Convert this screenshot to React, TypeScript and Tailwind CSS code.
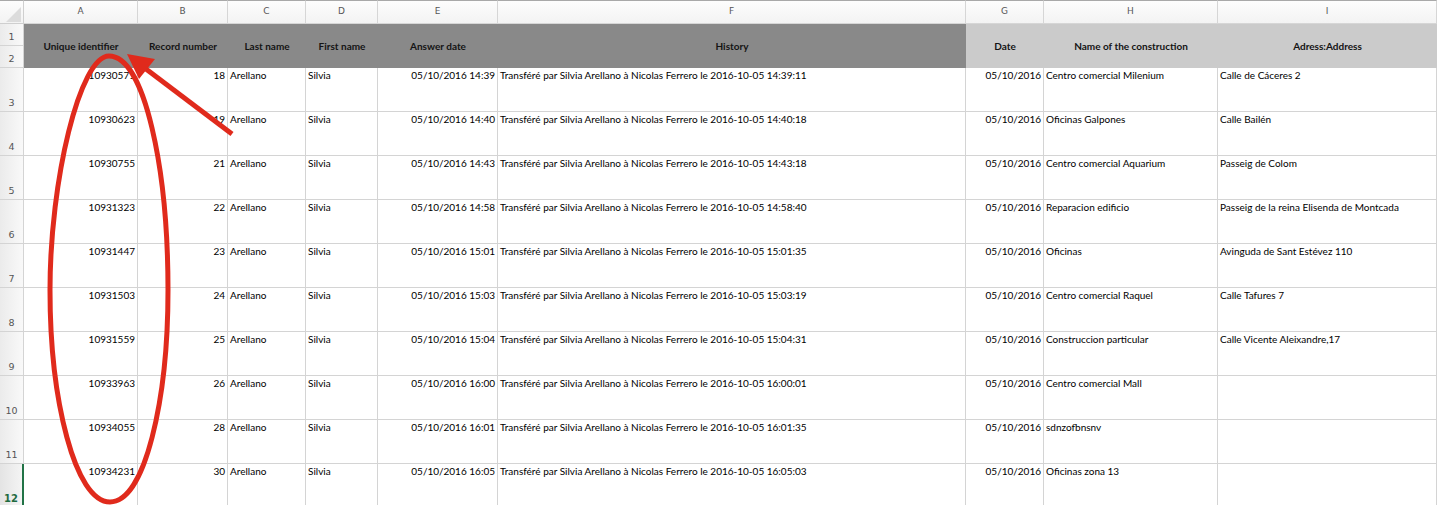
import React from "react";

const cols = ["A", "B", "C", "D", "E", "F", "G", "H", "I"];

type Row = {
  n: number;
  id: string;
  rec: string;
  time: string;
  sec: string;
  name: string;
  addr: string;
};

const rows: Row[] = [
  { n: 3, id: "10930571", rec: "18", time: "14:39", sec: "14:39:11", name: "Centro comercial Milenium", addr: "Calle de Cáceres 2" },
  { n: 4, id: "10930623", rec: "19", time: "14:40", sec: "14:40:18", name: "Oficinas Galpones", addr: "Calle Bailén" },
  { n: 5, id: "10930755", rec: "21", time: "14:43", sec: "14:43:18", name: "Centro comercial Aquarium", addr: "Passeig de Colom" },
  { n: 6, id: "10931323", rec: "22", time: "14:58", sec: "14:58:40", name: "Reparacion edificio", addr: "Passeig de la reina Elisenda de Montcada" },
  { n: 7, id: "10931447", rec: "23", time: "15:01", sec: "15:01:35", name: "Oficinas", addr: "Avinguda de Sant Estévez 110" },
  { n: 8, id: "10931503", rec: "24", time: "15:03", sec: "15:03:19", name: "Centro comercial Raquel", addr: "Calle Tafures 7" },
  { n: 9, id: "10931559", rec: "25", time: "15:04", sec: "15:04:31", name: "Construccion particular", addr: "Calle Vicente Aleixandre,17" },
  { n: 10, id: "10933963", rec: "26", time: "16:00", sec: "16:00:01", name: "Centro comercial Mall", addr: "" },
  { n: 11, id: "10934055", rec: "28", time: "16:01", sec: "16:01:35", name: "sdnzofbnsnv", addr: "" },
  { n: 12, id: "10934231", rec: "30", time: "16:05", sec: "16:05:03", name: "Oficinas zona 13", addr: "" },
];

const cell = "border-r border-b border-[#d4d4d4] overflow-hidden whitespace-nowrap pt-[1px] leading-[13px]";
const right = `${cell} text-right pr-[2px]`;
const left = `${cell} text-left pl-[2px]`;

export default function App() {
  return (
    <div className="relative w-[1437px] h-[505px] overflow-hidden bg-white font-['Lato',sans-serif] text-[10px] text-black">
      <div className="grid grid-cols-[24px_114px_90px_78px_72px_120px_468px_78px_174px_1fr] grid-rows-[24px_22px_22px_repeat(10,44px)]">
        {/* corner */}
        <div className="relative border-t border-t-[#a9a9a9] border-r border-b border-[#cfcfcf] bg-linear-to-b from-[#fdfdfd] to-[#f3f3f3]">
          <div className="absolute left-[6px] top-[6px] w-[15px] h-[15px] bg-[#dcdcdc] [clip-path:polygon(100%_0,100%_100%,0_100%)]" />
        </div>
        {cols.map((c) => (
          <div
            key={c}
            className="flex items-center justify-center border-t border-t-[#a9a9a9] border-r border-b border-[#d6d6d6] bg-linear-to-b from-[#fdfdfd] to-[#f3f3f3] font-['DejaVu_Sans',sans-serif] text-[9px] text-[#555]"
          >
            {c}
          </div>
        ))}

        {/* row 1 header */}
        <div className="flex items-end justify-center pb-[1px] border-r border-b border-[#d4d4d4] bg-linear-to-r from-[#ebebeb] to-[#f9f9f9] font-['DejaVu_Sans',sans-serif] text-[9.5px] text-[#555]">
          1
        </div>
        {[
          "Unique identifier",
          "Record number",
          "Last name",
          "First name",
          "Answer date",
          "History",
        ].map((h) => (
          <div key={h} className="row-span-2 flex items-center justify-center bg-[#898989] font-bold text-[#141414]">
            {h}
          </div>
        ))}
        {["Date", "Name of the construction", "Adress:Address"].map((h) => (
          <div key={h} className="row-span-2 flex items-center justify-center bg-[#cbcbcb] font-bold text-[#141414]">
            {h}
          </div>
        ))}
        <div className="flex items-end justify-center pb-[1px] border-r border-b border-[#d4d4d4] bg-linear-to-r from-[#ebebeb] to-[#f9f9f9] font-['DejaVu_Sans',sans-serif] text-[9.5px] text-[#555]">
          2
        </div>

        {rows.map((r) => (
          <React.Fragment key={r.n}>
            {r.n === 12 ? (
              <div className="flex items-end justify-center pb-[1px] border-r-2 border-r-[#217346] border-b border-b-[#d4d4d4] bg-linear-to-r from-[#e4e4e4] to-[#f4f4f4] font-['DejaVu_Sans',sans-serif] text-[10px] font-bold text-[#1f6b40]">
                12
              </div>
            ) : (
              <div className="flex items-end justify-center pb-[1px] border-r border-b border-[#d4d4d4] bg-linear-to-r from-[#ebebeb] to-[#f9f9f9] font-['DejaVu_Sans',sans-serif] text-[9.5px] text-[#555]">
                {r.n}
              </div>
            )}
            <div className={right}>{r.id}</div>
            <div className={right}>{r.rec}</div>
            <div className={left}>Arellano</div>
            <div className={left}>Silvia</div>
            <div className={right}>05/10/2016 {r.time}</div>
            <div className={left}>
              Transféré par Silvia Arellano à Nicolas Ferrero le 2016-10-05 {r.sec}
            </div>
            <div className={right}>05/10/2016</div>
            <div className={left}>{r.name}</div>
            <div className={left}>{r.addr}</div>
          </React.Fragment>
        ))}
      </div>

      {/* red annotation overlay */}
      <svg
        className="pointer-events-none absolute left-0 top-0"
        width="1437"
        height="505"
        viewBox="0 0 1437 505"
      >
        <path
          d="M109,56 C145,56 168,170 168,290 C168,400 145,502 110,502 C75,502 50,400 50,290 C50,180 80,56 109,56 Z"
          fill="none"
          stroke="#e02a1c"
          strokeWidth="5"
        />
        <line x1="232" y1="134" x2="146" y2="69" stroke="#e02a1c" strokeWidth="5" />
        <polygon points="127,54 155,59 139,79" fill="#e02a1c" />
      </svg>
    </div>
  );
}
